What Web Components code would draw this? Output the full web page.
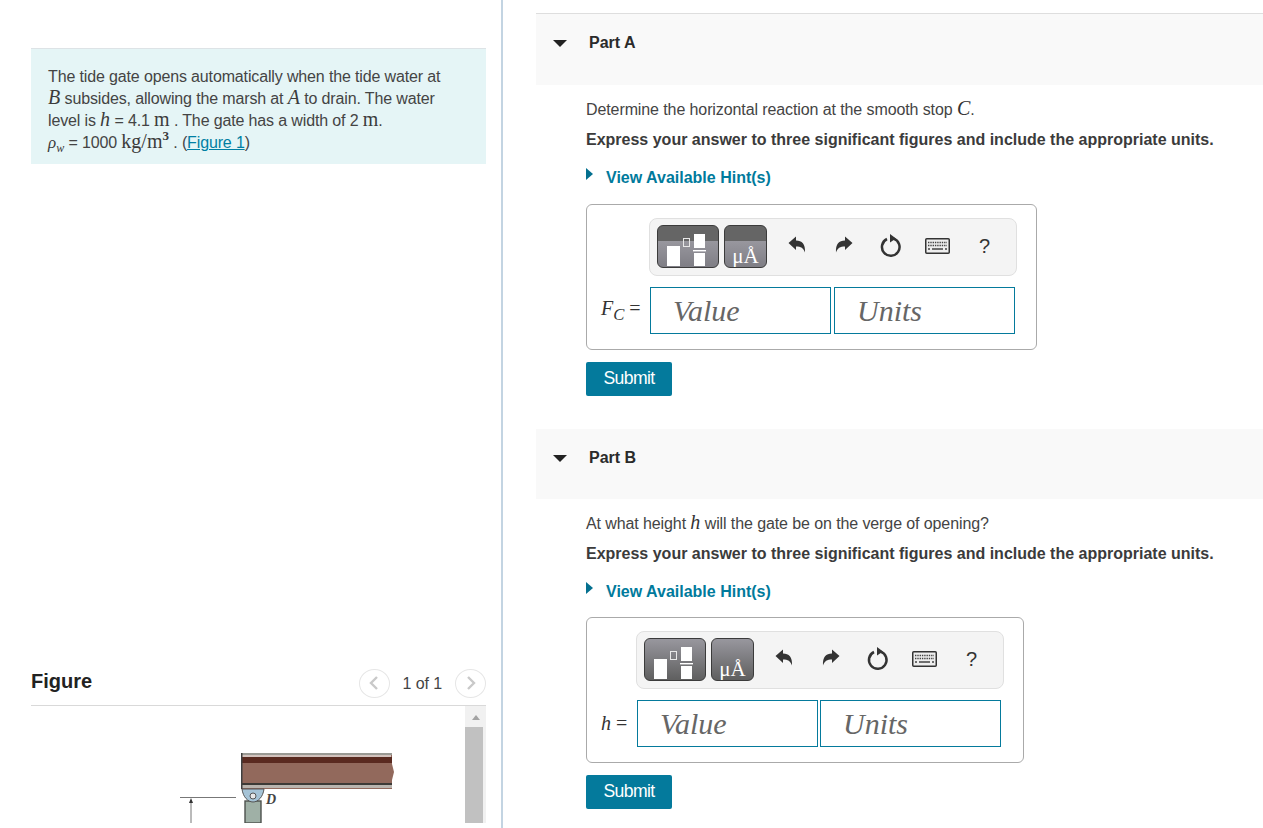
<!DOCTYPE html>
<html lang="en">
<head>
<meta charset="UTF-8">
<title>Tide gate</title>
<style>
html, body { margin: 0; height: 100%; overflow: hidden; background: #fff; }
body { font-family: "Liberation Sans", Arial, sans-serif; font-size: 16px; color: #3b3b3b; }
</style>
</head>
<body>

<template id="t-layout">
  <style>
    :host { display: grid; grid-template-columns: 503px 1fr; height: 828px; overflow: hidden; }
    .left { border-right: 2px solid #c3d4e2; box-sizing: border-box; height: 828px; padding: 48px 15px 0 31px; display: flex; flex-direction: column; }
    .right { padding: 13px 0 0 33px; display: flex; flex-direction: column; }
  </style>
  <div class="left"><slot name="left"></slot></div>
  <div class="right"><slot name="right"></slot></div>
</template>

<template id="t-intro">
  <style>
    :host { display: block; background: #e5f5f6; border-top: 1px solid #dde3e6; padding: 18px 30px 17px 17px; height: 116px; box-sizing: border-box; line-height: 20px; font-size: 16px; color: #444; letter-spacing: -0.14px; }
    ::slotted(i), ::slotted(b) { font-family: "Liberation Serif", serif; font-size: 20px; letter-spacing: 0; color: #3b3b3b; }
    ::slotted(a) { color: #007fa3; text-decoration: underline; }
  </style>
  <slot></slot>
</template>

<template id="t-figure">
  <style>
    :host { display: block; margin-top: 495px; }
    .head { display: flex; align-items: center; height: 46px; border-bottom: 1px solid #d9d9d9; }
    h2 { margin: 0 auto 0 0; position: relative; top: -1px; font-size: 20px; font-weight: bold; color: #222; }
    .count { margin: 4px 13px 0; font-size: 16px; color: #444; letter-spacing: -0.1px; }
    .pager { width: 31px; height: 29px; box-sizing: border-box; border: 1px solid #e6e6e6; border-radius: 50%; margin-top: 2px; display: flex; align-items: center; justify-content: center; }
    .view { display: flex; justify-content: space-between; height: 117px; overflow: hidden; }
    .bar { width: 21px; background: #f1f1f1; margin-right: 0; flex: none; }
    .up { width: 0; height: 0; margin: 9px auto 7px; border: 4.5px solid transparent; border-top: 0; border-bottom: 5px solid #a3a3a3; }
    .thumb { width: 18px; height: 100px; background: #c1c1c1; margin-left: 0; }
  </style>
  <div class="head">
    <h2>Figure</h2>
    <div class="pager"><svg width="12" height="16" viewBox="0 0 12 16"><path d="M9 2 L3 8 L9 14" fill="none" stroke="#c9c9c9" stroke-width="2.4"/></svg></div>
    <span class="count">1 of 1</span>
    <div class="pager"><svg width="12" height="16" viewBox="0 0 12 16"><path d="M3 2 L9 8 L3 14" fill="none" stroke="#c9c9c9" stroke-width="2.4"/></svg></div>
  </div>
  <div class="view">
    <svg width="434" height="117" viewBox="31 711 434 117">
      <path d="M242 758 H392 V769 L394 777 L392 785 V794 H242 Z" fill="#92695c"/>
      <rect x="242" y="758" width="150" height="2" fill="#9a9a94"/>
      <rect x="242" y="760" width="149" height="2" fill="#fff" opacity=".6"/>
      <rect x="242" y="762" width="150" height="6" fill="#5a2a20"/>
      <rect x="242" y="788" width="150" height="2" fill="#3c3a36"/>
      <rect x="242" y="790" width="150" height="3" fill="#b9b4ae"/>
      <rect x="241" y="758" width="1.5" height="36" fill="#3f3f3f"/>
      <rect x="245" y="806" width="16" height="22" fill="#9fb0a6" stroke="#4d524e" stroke-width="1.4"/>
      <path d="M242 794 H264 C263 802 258 807 253 807 C248 807 243 802 242 794 Z" fill="#a5c3d6" stroke="#555" stroke-width="1"/>
      <circle cx="253" cy="801" r="3" fill="#e8e8e8" stroke="#555" stroke-width="1"/>
      <path d="M180 802.5 H236" stroke="#777" stroke-width="1"/>
      <path d="M191 807 V828" stroke="#777" stroke-width="1"/>
      <path d="M191 803 L189 808 H193 Z" fill="#333"/>
      <text x="266" y="809" font-family="Liberation Serif, serif" font-style="italic" font-weight="bold" font-size="14" fill="#444">D</text>
    </svg>
    <div class="bar"><div class="up"></div><div class="thumb"></div></div>
  </div>
</template>

<template id="t-part">
  <style>
    :host { display: block; }
    .band { display: flex; background: #f9f9f9; padding: 19px 0 0 17px; box-sizing: border-box; color: #2b2b2b; font-weight: bold; line-height: 20px; height: var(--band, 72px); border-top: var(--rule, 1px solid #dedede); }
    .tri { width: 0; height: 0; margin: 7px 22px 0 0; border: 7px solid transparent; border-top: 7px solid #222; border-bottom: 0; }
    .body { padding: 13px 0 0 50px; }
    ::slotted(p) { margin: 0; }
  </style>
  <div class="band"><span class="tri"></span><span><slot name="title"></slot></span></div>
  <div class="body"><slot></slot></div>
</template>

<template id="t-prompt">
  <style>
    :host { display: block; line-height: 20px; color: #444; letter-spacing: -0.1px; }
    p { margin: 0; }
    .ask { height: 20px; margin-bottom: 12px; }
    .how { height: 20px; font-weight: bold; color: #3b3b3b; letter-spacing: 0; margin-bottom: 18px; }
    .hint { height: 20px; display: flex; color: #007a9c; font-weight: bold; letter-spacing: 0; }
    .arr { width: 0; height: 0; margin: 0 13px 0 0; border: 6.5px solid transparent; border-left: 7px solid #04708f; border-right: 0; }
    ::slotted(i) { font-family: "Liberation Serif", serif; font-size: 20px; letter-spacing: 0; color: #333; }
  </style>
  <p class="ask"><slot></slot></p>
  <p class="how">Express your answer to three significant figures and include the appropriate units.</p>
  <div class="hint"><span class="arr"></span>View Available Hint(s)</div>
</template>

<template id="t-toolbar">
  <style>
    :host { display: flex; align-items: center; box-sizing: border-box; width: 368px; height: 58px; background: #f4f4f4; border: 1px solid #e0e0e0; border-radius: 8px; padding: 0 0 2px 7px; }
    .tool { box-sizing: border-box; height: 43px; border: 1px solid #3b3b3b; border-radius: 6px; background: var(--tool-bg); position: relative; overflow: hidden; }
    .tpl { width: 62px; margin-right: 5px; }
    .unit { width: 43px; margin-right: 0; color: #fff; font-family: "Liberation Serif", serif; font-size: 21px; text-align: center; }
    .unit span { position: absolute; left: 0; right: 0; bottom: 0; line-height: 22px; white-space: nowrap; }
    .tpl svg { position: absolute; left: 0; top: 0; }
    .ico { width: 47px; height: 44px; display: flex; align-items: center; justify-content: center; flex: none; }
    .q { font-size: 20px; color: #333; width: 47px; text-align: center; }
  </style>
  <div class="tool tpl"><svg width="60" height="41" viewBox="0 0 60 41">
    <rect x="9" y="20" width="13" height="20" fill="#fff"/>
    <rect x="25.5" y="12.5" width="6" height="8" fill="none" stroke="#e8e8e8"/>
    <rect x="36" y="8" width="11" height="14" fill="#fff"/>
    <rect x="35" y="24" width="13" height="1.4" fill="#fff"/>
    <rect x="36" y="27" width="11" height="13" fill="#fff"/>
  </svg></div>
  <div class="tool unit"><span>μÅ</span></div>
  <div class="ico" style="margin-left:6px"><svg width="20" height="22" viewBox="0 0 20 22"><path d="M1.5 8 L9 1.5 V5.6 C15 5.6 18.5 9 18 17.5 C16.5 13 14 11.4 9 11.4 V15 Z" fill="#333"/></svg></div>
  <div class="ico"><svg width="20" height="22" viewBox="0 0 20 22"><path d="M18.5 8 L11 1.5 V5.6 C5 5.6 1.5 9 2 17.5 C3.5 13 6 11.4 11 11.4 V15 Z" fill="#333"/></svg></div>
  <div class="ico"><svg width="24" height="26" viewBox="0 0 24 26"><path d="M14.5 5.6 A8.8 8.8 0 1 1 8 6" fill="none" stroke="#333" stroke-width="2.5"/><path d="M11 1 L17 5.5 L11 9.5 Z" fill="#333"/></svg></div>
  <div class="ico"><svg width="25" height="16" viewBox="0 0 25 16"><rect x=".75" y=".75" width="23.5" height="14.5" rx="1" fill="#eee" stroke="#333" stroke-width="1.5"/><path d="M3 4.5 H22 M3 7.5 H22" stroke="#444" stroke-width="1.6" stroke-dasharray="1.4 .9"/><path d="M3 11 H5 M7 11 H18 M20 11 H22" stroke="#444" stroke-width="1.6"/></svg></div>
  <div class="ico q">?</div>
</template>

<template id="t-answer">
  <style>
    :host { display: block; box-sizing: border-box; border: 1px solid #aaa; border-radius: 6px; height: 146px; padding: 13px 0 0 0; width: var(--box-w); }
    .tb { margin-left: var(--tb-left); }
    .row { display: flex; align-items: center; margin-top: 11px; }
    .lbl { width: var(--lbl-w); padding-left: 14px; box-sizing: border-box; font-family: "Liberation Serif", serif; font-size: 20px; color: #333; white-space: nowrap; flex: none; }
    .lbl i { font-size: 20px; }
    .lbl sub { font-size: 14px; font-style: italic; vertical-align: -3px; line-height: 0; }
    .lbl span { font-family: "Liberation Sans", sans-serif; font-size: 16px; color: #444; }
    .field { box-sizing: border-box; width: 181px; height: 47px; border: 1px solid #047a9c; padding-left: 22px; font-family: "Liberation Serif", serif; font-style: italic; font-size: 30px; line-height: 45px; color: #666; margin-right: var(--field-gap); }
  </style>
  <math-toolbar class="tb"></math-toolbar>
  <div class="row">
    <div class="lbl"><slot></slot></div>
    <div class="field">Value</div>
    <div class="field">Units</div>
  </div>
</template>

<template id="t-submit">
  <style>
    :host { display: inline-block; box-sizing: border-box; width: 86px; height: 34px; background: #047a9c; border-radius: 2px; color: #fff; font-size: 17.6px; line-height: 33px; text-align: center; letter-spacing: -0.6px; }
  </style>
  <slot></slot>
</template>

<tide-layout>
  <intro-note slot="left">The tide gate opens automatically when the tide water at <i>B</i> subsides, allowing the marsh at <i>A</i> to drain. The water level is <i>h</i> = 4.1 <b style="font-weight:normal">m</b> . The gate has a width of 2 <b style="font-weight:normal">m</b>.<br><i style="font-size:17px">ρ<sub style="font-size:12px">w</sub></i> = 1000 <b style="font-weight:normal">kg/m<sup style="font-size:13px;font-weight:bold;line-height:0">3</sup></b> . (<a>Figure 1</a>)</intro-note>
  <figure-view slot="left"></figure-view>

  <part-section slot="right">
    <span slot="title">Part A</span>
    <part-prompt>Determine the horizontal reaction at the smooth stop <i>C</i>.</part-prompt>
    <answer-box style="--box-w:451px;--tb-left:62px;--lbl-w:63px;--field-gap:3px;margin-top:16px"><i>F<sub>C</sub></i> <span>=</span></answer-box>
    <submit-button style="margin-top:12px">Submit</submit-button>
  </part-section>

  <part-section slot="right" style="--band:70px;--rule:0;margin-top:33px">
    <span slot="title">Part B</span>
    <part-prompt>At what height <i>h</i> will the gate be on the verge of opening?</part-prompt>
    <answer-box style="--box-w:438px;--tb-left:49px;--lbl-w:50px;--field-gap:2px;margin-top:15px;--tool-bg:linear-gradient(#98979e,#5f5f5f)"><i>h</i> <span>=</span></answer-box>
    <submit-button style="margin-top:12px">Submit</submit-button>
  </part-section>
</tide-layout>

<script>
function shadowFrom(el, id) {
    el.attachShadow({ mode: 'open' });
    el.shadowRoot.appendChild(document.getElementById(id).content.cloneNode(true));
}

const elements = {
    'tide-layout': 't-layout',
    'intro-note': 't-intro',
    'figure-view': 't-figure',
    'part-section': 't-part',
    'part-prompt': 't-prompt',
    'math-toolbar': 't-toolbar',
    'answer-box': 't-answer',
    'submit-button': 't-submit'
};

for (const [name, id] of Object.entries(elements)) {
    customElements.define(name, class extends HTMLElement {
        constructor() {
            super();
            shadowFrom(this, id);
        }
    });
}
</script>
<style>
/* part A tools have a hard split, part B overrides this on the box */
answer-box { --tool-bg: linear-gradient(#656565 0 15px, #98979e 15px, #7f7e85 100%); }
</style>
</body>
</html>
